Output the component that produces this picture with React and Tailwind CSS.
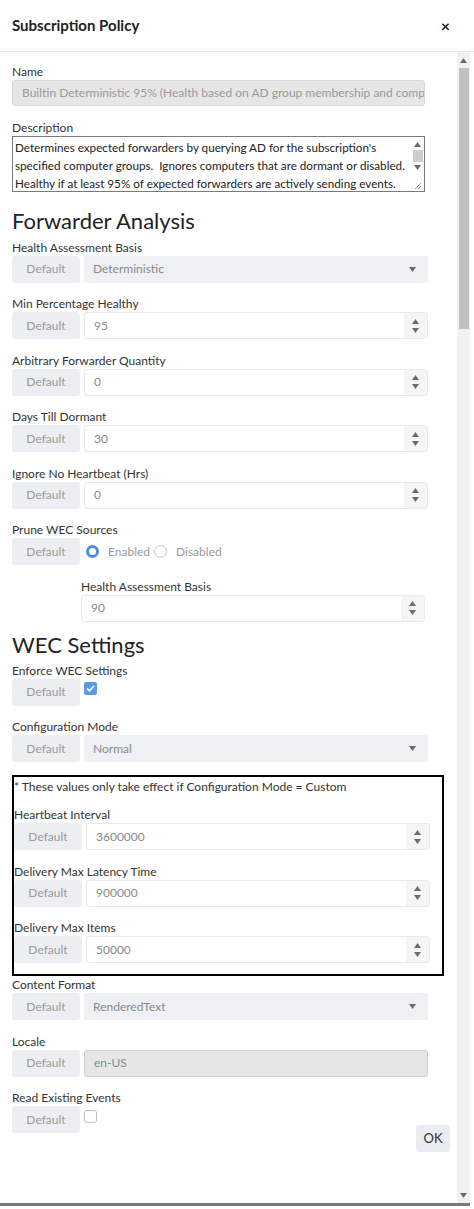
import React from "react";

const font = { fontFamily: 'Lato, "Open Sans", "Liberation Sans", sans-serif' };

function Arrow({ up }) {
  return (
    <svg width="7" height="5" viewBox="0 0 7 5" className="block">
      {up ? <path d="M3.5 0 L7 5 L0 5 Z" fill="#6b6b6b" /> : <path d="M0 0 L7 0 L3.5 5 Z" fill="#6b6b6b" />}
    </svg>
  );
}

function DefaultBtn() {
  return (
    <div className="w-[68px] h-[27px] shrink-0 rounded-[3px] bg-[#eceef1] text-[#9a9a9a] flex items-center justify-center text-[12px]">
      Default
    </div>
  );
}

function Label({ children, className = "" }) {
  return <div className={"text-[12px] leading-[17px] text-[#333] " + className}>{children}</div>;
}

function NumberInput({ value, className = "" }) {
  return (
    <div className={"h-[27px] flex-1 flex rounded-[3px] border border-[#e8e9ec] bg-white " + className}>
      <div className="flex-1 flex items-center pl-[9px] text-[12px] text-[#8a8a8a]">{value}</div>
      <div className="w-[23px] bg-[#f4f5f6] flex flex-col items-center justify-center gap-[4px]">
        <Arrow up />
        <Arrow />
      </div>
    </div>
  );
}

function SelectInput({ value }) {
  return (
    <div className="h-[27px] flex-1 flex items-center justify-between rounded-[3px] bg-[#eef0f3] pl-[9px] pr-[12px] text-[12px] text-[#8a8a8a]">
      <span>{value}</span>
      <Arrow />
    </div>
  );
}

function Field({ label, children, className = "mb-[12.5px]" }) {
  return (
    <div className={className}>
      <Label>{label}</Label>
      <div className="flex gap-[4px]">
        <DefaultBtn />
        {children}
      </div>
    </div>
  );
}

function Radio({ checked, label }) {
  return (
    <div className="flex items-center">
      {checked ? (
        <span className="w-[13px] h-[13px] rounded-full border-[3.5px] border-[#4a8fe0] bg-white" />
      ) : (
        <span className="w-[13px] h-[13px] rounded-full border border-[#c5c5c5] bg-white" />
      )}
      <span className="ml-[9px] text-[12px] text-[#9a9a9a]">{label}</span>
    </div>
  );
}

function Checkbox({ checked }) {
  if (checked) {
    return (
      <span className="mt-[3px] w-[13px] h-[13px] rounded-[2px] bg-[#5a9be2] flex items-center justify-center">
        <svg width="9" height="7" viewBox="0 0 9 7">
          <path d="M1 3.5 L3.4 5.8 L8 1" stroke="white" strokeWidth="1.6" fill="none" />
        </svg>
      </span>
    );
  }
  return <span className="mt-[4px] w-[13px] h-[13px] rounded-[3px] border border-[#bdbdbd] bg-white" />;
}

function Heading({ children, className }) {
  return <h2 className={"text-[22px] leading-[26px] text-[#222] " + className}>{children}</h2>;
}

export default function App() {
  return (
    <div style={font} className="w-[474px] h-[1209px] bg-white flex flex-col overflow-hidden">
      <div className="h-[52px] shrink-0 border-b border-[#e5e5e5] flex items-center justify-between pl-[12px] pr-[24px]">
        <span className="text-[15px] font-bold text-[#222]">Subscription Policy</span>
        <span className="text-[16px] font-bold text-[#222]">×</span>
      </div>

      <div className="flex-1 flex min-h-0">
        <div className="w-[457px] pl-[12px] pt-[11px]">
          <div className="w-[416px]">
            <div className="mb-[12.5px]">
              <Label>Name</Label>
              <div className="h-[26px] rounded-[3px] border border-[#d8d8d8] bg-[#e6e6e6] flex items-center pl-[9px] text-[12px] text-[#9a9a9a] whitespace-nowrap overflow-hidden w-[413px]">
                Builtin Deterministic 95% (Health based on AD group membership and compu
              </div>
            </div>
            <div className="mb-[13px]">
              <Label>Description</Label>
              <div className="h-[56px] w-[413px] border border-[#7a7a7a] flex">
                <div className="flex-1 pl-[2px] pt-[1px] text-[11.7px] leading-[18px] text-[#222] overflow-hidden whitespace-nowrap">
                  Determines expected forwarders by querying AD for the subscription's
                  <br />
                  specified computer groups.&nbsp; Ignores computers that are dormant or disabled.
                  <br />
                  Healthy if at least 95% of expected forwarders are actively sending events.
                </div>
                <div className="w-[13px] flex flex-col items-center pt-[5px]">
                  <Arrow up />
                  <div className="w-[10px] h-[12px] bg-[#cdcdcd] mt-[3px]" />
                  <div className="mt-[3px]"><Arrow /></div>
                  <div className="flex-1" />
                  <svg width="8" height="8" viewBox="0 0 8 8" className="mb-[1px]">
                    <path d="M7 1 L1 7 M7 4 L4 7" stroke="#9a9a9a" strokeWidth="1" />
                  </svg>
                </div>
              </div>
            </div>

            <Heading className="pt-[3px] mb-[5px]">Forwarder Analysis</Heading>
            <Field label="Health Assessment Basis">
              <SelectInput value="Deterministic" />
            </Field>
            <Field label="Min Percentage Healthy">
              <NumberInput value="95" />
            </Field>
            <Field label="Arbitrary Forwarder Quantity">
              <NumberInput value="0" />
            </Field>
            <Field label="Days Till Dormant">
              <NumberInput value="30" />
            </Field>
            <Field label="Ignore No Heartbeat (Hrs)">
              <NumberInput value="0" />
            </Field>
            <Field label="Prune WEC Sources">
              <div className="flex items-center gap-[4px] pl-[2px]">
                <Radio checked label="Enabled" />
                <Radio label="Disabled" />
              </div>
            </Field>
            <div className="pl-[69px] mb-[9px]">
              <Label>Health Assessment Basis</Label>
              <NumberInput value="90" className="w-[344px] flex-none" />
            </div>

            <Heading className="pt-[1px] mb-[4px]">WEC Settings</Heading>
            <Field label="Enforce WEC Settings">
              <Checkbox checked />
            </Field>
            <Field label="Configuration Mode" className="mb-[13px]">
              <SelectInput value="Normal" />
            </Field>

            <div className="w-[432px] border-2 border-black pr-[12px] pt-[1px]">
              <div className="text-[12px] leading-[17px] text-[#333] mb-[11px]">* These values only take effect if Configuration Mode = Custom</div>
              <Field label="Heartbeat Interval">
                <NumberInput value="3600000" />
              </Field>
              <Field label="Delivery Max Latency Time">
                <NumberInput value="900000" />
              </Field>
              <Field label="Delivery Max Items" className="mb-[11px]">
                <NumberInput value="50000" />
              </Field>
            </div>

            <Field label="Content Format">
              <SelectInput value="RenderedText" />
            </Field>
            <Field label="Locale">
              <div className="h-[27px] flex-1 flex items-center rounded-[3px] border border-[#cfcfcf] bg-[#e6e6e6] pl-[9px] text-[12px] text-[#8a8a8a]">
                en-US
              </div>
            </Field>
            <div>
              <Label>Read Existing Events</Label>
              <div className="flex gap-[4px]">
                <DefaultBtn />
                <Checkbox />
              </div>
            </div>
            <div className="flex justify-end -mt-[8px] -mr-[22px]">
              <div className="w-[34px] h-[27px] rounded-[3px] bg-[#e9ecf0] flex items-center justify-center text-[13px] text-[#333]">
                OK
              </div>
            </div>
          </div>
        </div>

        <div className="w-[13px] bg-[#f1f1f1] flex flex-col items-center pt-[6px] pb-[5px]">
          <Arrow up />
          <div className="w-[10px] h-[261px] bg-[#c1c1c1] mt-[5px]" />
          <div className="flex-1" />
          <Arrow />
        </div>
      </div>
      <div className="h-[3px] w-[470px] bg-[#7a7a7a] shrink-0" />
      <div className="h-[3px] shrink-0" />
    </div>
  );
}
